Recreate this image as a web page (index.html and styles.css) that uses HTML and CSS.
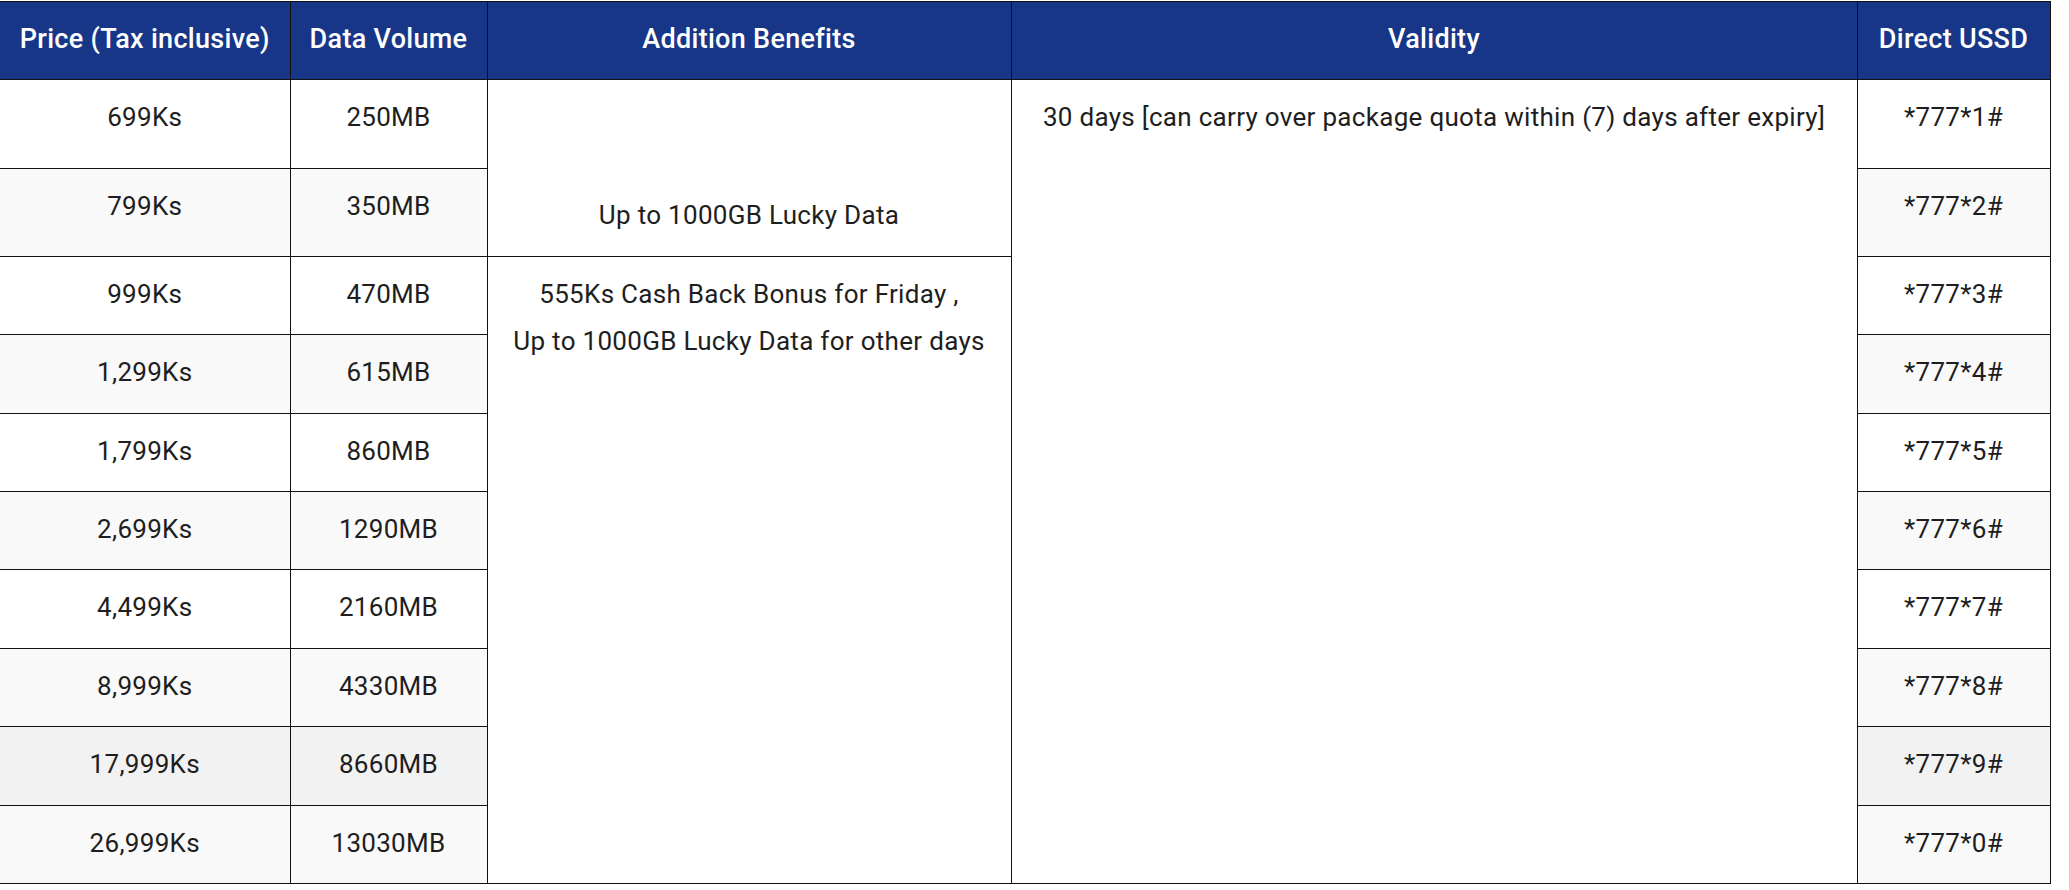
FILE: index.html
```html
<!DOCTYPE html>
<html lang="en">
<head>
<meta charset="utf-8">
<title>Data Packages</title>
<link rel="stylesheet" href="styles.css">
</head>
<body>
<div class="wrap">
<table class="plans">
  <colgroup>
    <col class="c-price">
    <col class="c-data">
    <col class="c-benefit">
    <col class="c-validity">
    <col class="c-ussd">
  </colgroup>
  <thead>
    <tr>
      <th>Price (Tax inclusive)</th>
      <th>Data Volume</th>
      <th>Addition Benefits</th>
      <th>Validity</th>
      <th>Direct USSD</th>
    </tr>
  </thead>
  <tbody>
    <tr>
      <td>699Ks</td>
      <td>250MB</td>
      <td rowspan="2" class="benefit-low">Up to 1000GB Lucky Data</td>
      <td rowspan="10">30 days [can carry over package quota within (7) days after expiry]</td>
      <td>*777*1#</td>
    </tr>
    <tr>
      <td>799Ks</td>
      <td>350MB</td>
      <td>*777*2#</td>
    </tr>
    <tr>
      <td>999Ks</td>
      <td>470MB</td>
      <td rowspan="8">555Ks Cash Back Bonus for Friday ,<br>Up to 1000GB Lucky Data for other days</td>
      <td>*777*3#</td>
    </tr>
    <tr>
      <td>1,299Ks</td>
      <td>615MB</td>
      <td>*777*4#</td>
    </tr>
    <tr>
      <td>1,799Ks</td>
      <td>860MB</td>
      <td>*777*5#</td>
    </tr>
    <tr>
      <td>2,699Ks</td>
      <td>1290MB</td>
      <td>*777*6#</td>
    </tr>
    <tr>
      <td>4,499Ks</td>
      <td>2160MB</td>
      <td>*777*7#</td>
    </tr>
    <tr>
      <td>8,999Ks</td>
      <td>4330MB</td>
      <td>*777*8#</td>
    </tr>
    <tr class="is-hover">
      <td>17,999Ks</td>
      <td>8660MB</td>
      <td>*777*9#</td>
    </tr>
    <tr>
      <td>26,999Ks</td>
      <td>13030MB</td>
      <td>*777*0#</td>
    </tr>
  </tbody>
</table>
</div>
</body>
</html>
```

FILE: styles.css
```css
html, body {
  margin: 0;
  padding: 0;
  background: #ffffff;
}

body {
  font-family: Roboto, "Liberation Sans", sans-serif;
  color: #1e1e1e;
}

.wrap {
  padding-top: 1px;
}

.plans {
  border-collapse: collapse;
  table-layout: fixed;
  width: 2050px;
  font-size: 26px;
  line-height: 47.4px;
  letter-spacing: 0.3px;
}

.c-price { width: 290px; }
.c-data { width: 197px; }
.c-benefit { width: 524px; }
.c-validity { width: 846px; }
.c-ussd { width: 193px; }

.plans th,
.plans td {
  border: 1px solid #111111;
  padding: 14px 6px 16px;
  text-align: center;
  vertical-align: top;
  font-weight: 400;
}

.plans th:first-child,
.plans td:first-child {
  border-left: none;
}

.plans thead th {
  background: #183687;
  color: #ffffff;
  font-weight: 500;
  font-size: 27px;
}

.plans tbody tr:nth-child(even) td {
  background: #f9f9f9;
}

.plans tbody tr.is-hover td {
  background: #f2f2f2;
}

.plans td.benefit-low {
  padding-top: 112px;
}
```
